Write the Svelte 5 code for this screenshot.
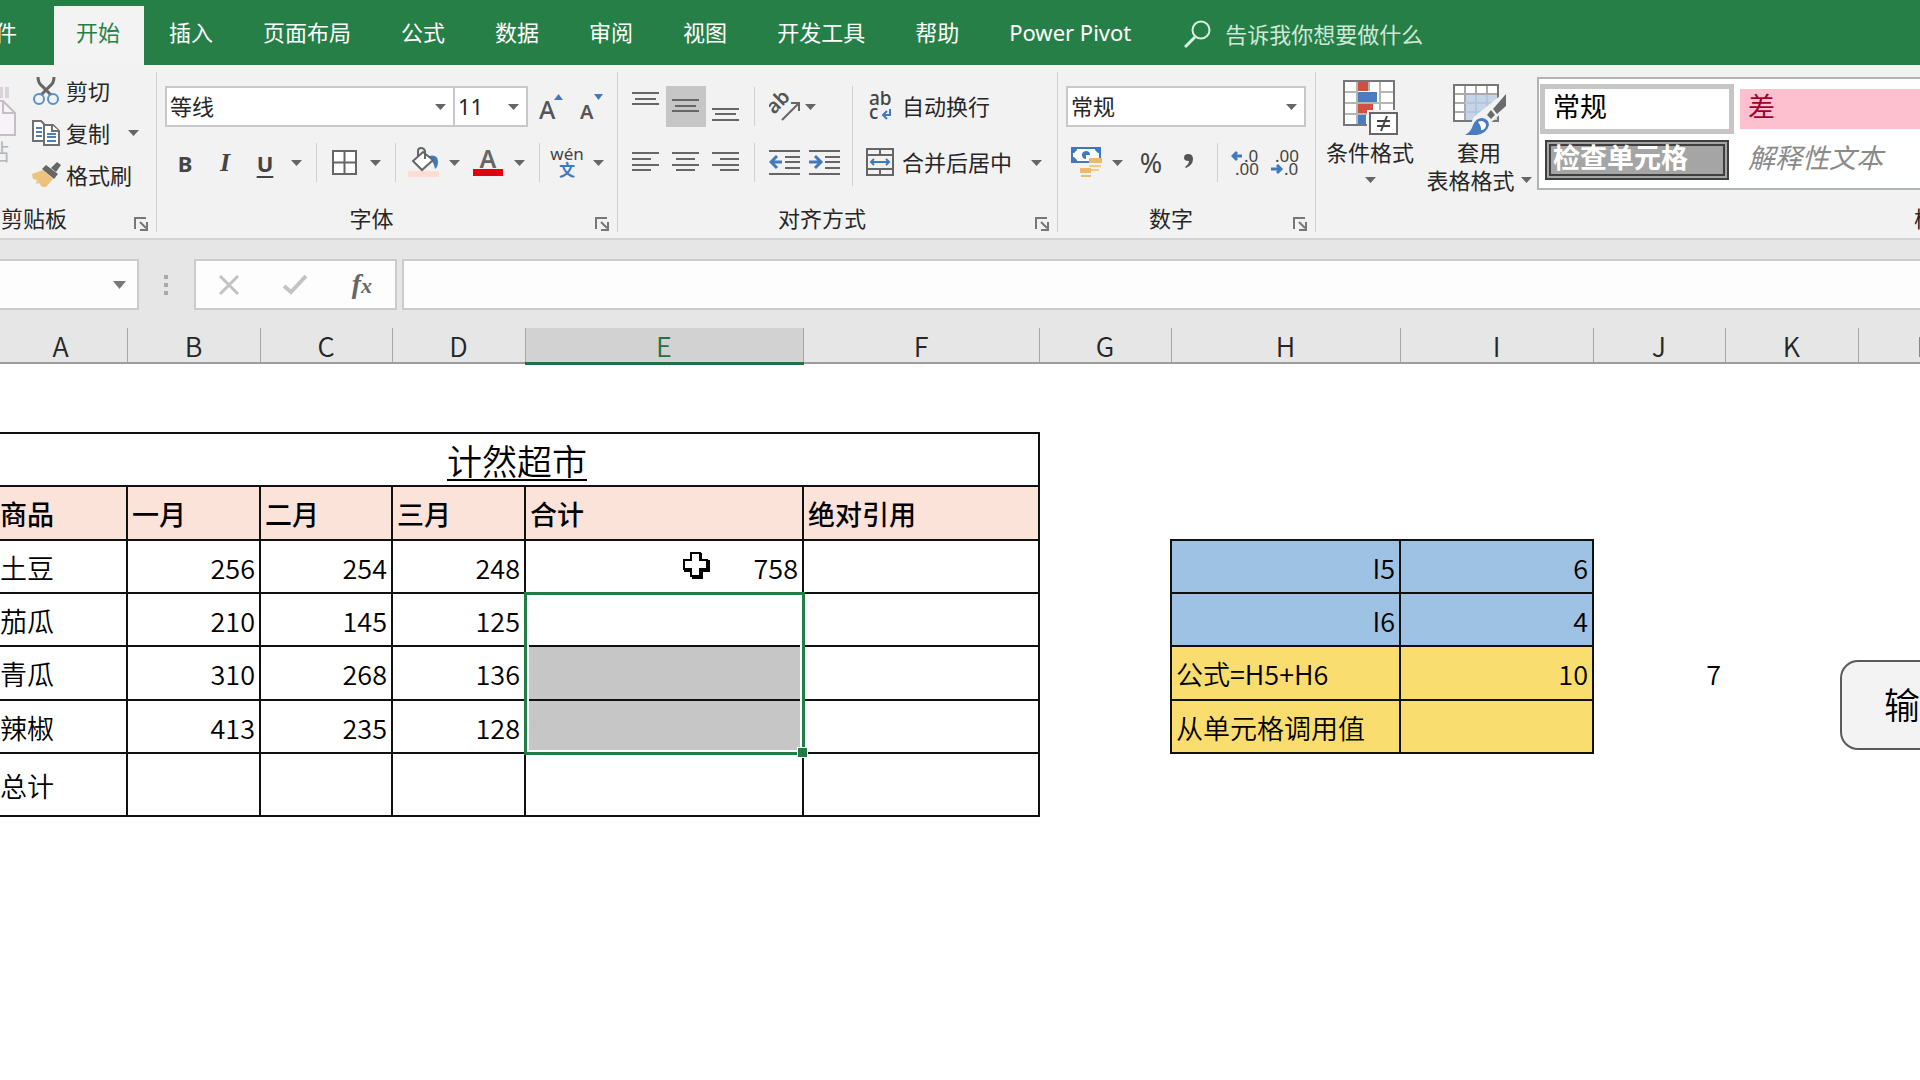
<script>
    let fontName = '等线';
    let fontSize = '11';
    let numberFormat = '常规';
    let formula = '';
    let cellName = '';

    const tabs = ['插入', '页面布局', '公式', '数据', '审阅', '视图', '开发工具', '帮助', 'Power Pivot'];

    const columns = [
        { name: 'A', width: 132 },
        { name: 'B', width: 133 },
        { name: 'C', width: 132 },
        { name: 'D', width: 133 },
        { name: 'E', width: 278 },
        { name: 'F', width: 236 },
        { name: 'G', width: 132 },
        { name: 'H', width: 229 },
        { name: 'I', width: 193 },
        { name: 'J', width: 132 },
        { name: 'K', width: 133 },
        { name: 'L', width: 132 }
    ];
    const tableWidth = columns.reduce((sum, c) => sum + c.width, 0);

    // every row lists its cells from column A on, '' is an empty cell
    const rows = [
        { height: 70, cells: [] },
        { height: 53, title: '计然超市', cells: [] },
        { height: 54, head: true, cells: ['商品', '一月', '二月', '三月', '合计', '绝对引用'] },
        { height: 53, cells: ['土豆', 256, 254, 248, 758, '', '', 'I5', 6], fill: 'blue' },
        { height: 53, cells: ['茄瓜', 210, 145, 125, '', '', '', 'I6', 4], fill: 'blue', active: true },
        { height: 54, cells: ['青瓜', 310, 268, 136, '', '', '', '公式=H5+H6', 10, 7], fill: 'yellow', picked: true },
        { height: 53, cells: ['辣椒', 413, 235, 128, '', '', '', '从单元格调用值', ''], fill: 'yellow', picked: true },
        { height: 63, cells: ['总计', '', '', '', '', ''] }
    ];

    function cellClass(row, r, i) {
        let value = row.cells[i];
        let list = [];
        if (r > 1 && i < 6) list.push('boxed');
        if (row.head && i < 6) list.push('head');
        if (row.fill && (i == 7 || i == 8)) list.push('boxed', row.fill);
        if (row.picked && i == 4) list.push('picked');
        if (typeof value == 'number' || /^I\d$/.test(value)) list.push('right');
        return list.join(' ');
    }
</script>

<style>
    :global(body) {
        background: #fff;
        overflow-x: hidden;
    }

    .app {
        font-family: "Noto Sans", "Noto Sans CJK SC", sans-serif;
        font-size: 22px;
        line-height: 28px;
        color: #262626;
        overflow: hidden;
    }

    button, input, select {
        font: inherit;
        color: inherit;
        background: none;
        border: none;
        border-radius: 0;
        margin: 0;
        padding: 0;
    }

    svg {
        display: block;
        flex: none;
    }

    /* tabs */

    .tabs {
        display: flex;
        align-items: flex-end;
        height: 65px;
        margin-left: -52px;
        background: #277f48;
        white-space: nowrap;
    }

    .tab {
        flex: none;
        height: 59px;
        padding: 0 25px 8px;
        color: #fff;
    }

    .tab.open {
        margin-left: 12px;
        padding: 0 24px 8px 22px;
        background: #f3f3f3;
        color: #277f48;
    }

    .tell {
        display: flex;
        align-items: center;
        gap: 14px;
        height: 59px;
        margin-left: 28px;
        padding-bottom: 4px;
        box-sizing: border-box;
        color: #cfe8d6;
    }

    /* ribbon */

    .ribbon {
        display: flex;
        height: 173px;
        background: #f2f2f2;
        border-bottom: 2px solid #d4d4d4;
    }

    .group {
        position: relative;
        flex: none;
        display: flex;
        flex-direction: column;
        box-sizing: border-box;
    }

    .group::after {
        content: "";
        position: absolute;
        right: 0;
        top: 7px;
        bottom: 6px;
        width: 1px;
        background: #d0d0d0;
    }

    .clipboard { width: 157px; }
    .font { width: 461px; }
    .align { width: 440px; }
    .number { width: 258px; }
    .styles { width: 1240px; }

    .body {
        height: 134px;
        display: flex;
        box-sizing: border-box;
    }

    .font .body, .number .body {
        flex-direction: column;
        gap: 15px;
        padding: 21px 8px 0;
    }

    .align .body {
        padding: 21px 0 0 8px;
    }

    .caption {
        display: flex;
        align-items: center;
        justify-content: center;
        height: 40px;
        padding-right: 32px;
    }

    .styles .caption {
        padding-right: 0;
    }

    .clipboard .caption {
        justify-content: flex-start;
        padding-left: 1px;
    }

    .launch {
        position: absolute;
        right: 8px;
        bottom: 7px;
    }

    .row {
        display: flex;
        align-items: center;
        height: 41px;
    }

    .tool {
        flex: none;
        display: flex;
        align-items: center;
        justify-content: center;
        width: 40px;
        height: 41px;
        color: #444;
    }

    .tool.on {
        background: #c6c6c6;
    }

    .drop {
        flex: none;
        display: flex;
        align-items: center;
        justify-content: center;
        width: 25px;
        height: 41px;
        padding-right: 2px;
        box-sizing: border-box;
    }

    .drop.tight {
        width: 14px;
    }

    .sep {
        flex: none;
        width: 1px;
        height: 39px;
        margin: 0 7px 0 6px;
        background: #d0d0d0;
    }

    .align .sep {
        margin: 0 9px 0 8px;
    }

    .sep.long {
        height: 100px;
    }

    .stack {
        display: flex;
        flex-direction: column;
        gap: 15px;
    }

    .wide {
        display: flex;
        align-items: center;
        gap: 8px;
        height: 41px;
        padding: 0 0 2px 4px;
        white-space: nowrap;
    }

    .merge {
        margin-right: 13px;
    }

    .bold { font-weight: bold; }
    .italic { font-family: "Liberation Serif", serif; font-style: italic; font-weight: bold; font-size: 26px; }
    .under { font-weight: bold; text-decoration: underline; text-underline-offset: 4px; text-decoration-thickness: 2px; }
    .percent { font-size: 27px; }

    .paste {
        flex: none;
        width: 70px;
        margin-left: -48px;
        padding: 16px 0 0;
        display: flex;
        flex-direction: column;
        align-items: center;
        color: #b5b5b5;
    }

    .clips {
        padding-top: 5px;
    }

    .clips .row {
        height: 42px;
    }

    .clip {
        display: flex;
        align-items: center;
        gap: 5px;
        padding-left: 10px;
        white-space: nowrap;
    }

    .clip + .drop {
        margin-left: 12px;
    }

    .pick {
        position: relative;
        flex: none;
    }

    .pick select {
        appearance: none;
        width: 100%;
        height: 41px;
        padding: 0 3px 2px;
        border: 2px solid #c8c8c8;
        background: #fff;
    }

    .pick + .pick select {
        border-left: none;
    }

    .pick svg {
        position: absolute;
        right: 9px;
        top: 18px;
        pointer-events: none;
    }

    .family { width: 290px; }
    .size { width: 73px; margin-right: 4px; }
    .format { width: 240px; }

    .big {
        flex: none;
        display: flex;
        flex-direction: column;
        align-items: center;
        justify-content: flex-start;
        width: 108px;
        padding: 14px 0 0;
        white-space: nowrap;
    }

    .big.table {
        width: 110px;
    }

    .big svg + span {
        margin-top: 3px;
    }

    .big .with-arrow {
        display: flex;
        align-items: center;
        gap: 6px;
    }

    .big .arrow-line {
        display: flex;
        align-items: center;
        height: 28px;
    }

    .gallery {
        flex: 1;
        display: grid;
        grid-template-columns: repeat(5, 184px);
        grid-auto-rows: 40px;
        gap: 11px;
        height: 113px;
        margin: 12px 0 0 3px;
        padding: 10px 6px;
        box-sizing: border-box;
        border: 2px solid #b0b4b4;
        background: #fff;
        font-size: 27px;
        overflow: hidden;
    }

    .swatch {
        text-align: left;
        padding: 0 8px 4px;
        background: #fff;
        white-space: nowrap;
    }

    .swatch.normal { box-shadow: 0 0 0 5px #c6c6c6; color: #000; }
    .swatch.bad { background: #fcc0cf; color: #9c0030; }
    .swatch.check { background: #a5a5a5; color: #fff; font-weight: bold; border: 6px double #3f3f3f; padding: 0 2px 4px; line-height: 24px; }
    .swatch.note { color: #8a8a8a; font-style: italic; }

    /* formula bar */

    .formula {
        display: flex;
        align-items: center;
        padding: 19px 0 18px;
        background: #e6e6e6;
    }

    .box {
        display: flex;
        align-items: center;
        height: 51px;
        box-sizing: border-box;
        border: 2px solid #cbcbcb;
        background: #fdfdfd;
    }

    .name {
        flex: none;
        width: 141px;
        margin-left: -2px;
        padding-right: 4px;
    }

    .name input {
        flex: 1;
        min-width: 0;
        height: 40px;
    }

    .dots {
        margin: 0 26px 0 25px;
    }

    .entry {
        flex: none;
        width: 203px;
    }

    .entry button {
        flex: 1;
        display: flex;
        justify-content: center;
    }

    .fx {
        font-family: "Liberation Serif", serif;
        font-style: italic;
        font-weight: bold;
        font-size: 28px;
        color: #666;
    }

    .fx small {
        font-size: 22px;
    }

    .text {
        flex: 1;
        min-width: 0;
        margin: 0 -2px 0 5px;
        padding: 0 8px;
    }

    /* sheet */

    .sheet {
        margin-left: -6px;
        font-family: "Noto Sans CJK SC", sans-serif;
        font-size: 27px;
        font-weight: 350;
        line-height: 36px;
        color: #000;
    }

    table {
        table-layout: fixed;
        border-collapse: collapse;
    }

    th, td {
        padding: 2px 4px 0;
        text-align: left;
        font-weight: 350;
        white-space: nowrap;
        overflow: visible;
    }

    thead th {
        height: 35px;
        padding: 2px 0 0;
        box-sizing: border-box;
        line-height: 30px;
        text-align: center;
        background: #e6e6e6;
        border-right: 1px solid #a6a6a6;
        border-bottom: 2px solid #9c9c9c;
        color: #262626;
    }

    thead th.current {
        background: #d2d2d2;
        border-bottom: 3px solid #217346;
        color: #217346;
    }

    td.boxed {
        border: 2px solid #111;
    }

    td.title {
        border: 2px solid #111;
        padding: 0;
        text-align: center;
        font-size: 35px;
        text-decoration: underline;
        text-decoration-thickness: 2px;
        text-underline-offset: 4px;
    }

    td.head {
        background: #fce3da;
        font-weight: 500;
    }

    td.right { text-align: right; }
    td.blue { background: #9dc2e4; }
    td.yellow { background: #f9dd6f; }
    td.picked { background: #c6c6c6; }

    td.anchor {
        position: relative;
    }

    .selection {
        position: absolute;
        left: -2px;
        top: -2px;
        width: 281px;
        height: 163px;
        box-sizing: border-box;
        border: 3px solid #217c45;
        box-shadow: inset 0 0 0 2px #fff;
        z-index: 1;
    }

    .selection::after {
        content: "";
        position: absolute;
        right: -6px;
        bottom: -6px;
        width: 9px;
        height: 9px;
        border: 1px solid #fff;
        background: #217c45;
    }

    .pointer {
        position: absolute;
        left: 156px;
        top: 10px;
    }

    .shape {
        position: absolute;
        left: 115px;
        top: 14px;
        width: 200px;
        height: 90px;
        padding: 0 0 4px 42px;
        border: 2px solid #5a5a5a;
        border-radius: 18px;
        background: #f3f3f3;
        font-size: 36px;
        text-align: left;
    }
</style>

{#snippet arrow()}
    <svg width="11" height="6" viewBox="0 0 11 6"><path d="M0 0h11L5.5 6z" fill="#666" /></svg>
{/snippet}

{#snippet launcher(label)}
    <button class="launch" aria-label={label}>
        <svg width="15" height="14" viewBox="0 0 15 14" fill="none" stroke="#777" stroke-width="2">
            <path d="M1 12V1h11M6 5l6 6M13 5v8H6" />
        </svg>
    </button>
{/snippet}

{#snippet lines(ys, xs)}
    <svg width="28" height="30" viewBox="0 0 28 30" stroke="#666" stroke-width="2">
        {#each ys as y, i}
            <path d="M{xs[i][0]} {y}H{xs[i][1]}" />
        {/each}
    </svg>
{/snippet}

<div class="app">
    <nav class="tabs">
        <button class="tab">文件</button>
        <button class="tab open">开始</button>
        {#each tabs as tab}
            <button class="tab">{tab}</button>
        {/each}
        <button class="tell">
            <svg width="27" height="28" viewBox="0 0 27 28" fill="none" stroke="#d9f0df" stroke-width="2">
                <circle cx="17" cy="10" r="8.5" />
                <path d="M11 17L1 27" stroke-width="3" />
            </svg>
            告诉我你想要做什么
        </button>
    </nav>

    <div class="ribbon">
        <section class="group clipboard">
            <div class="body">
                <button class="paste">
                    <svg width="60" height="56" viewBox="0 0 60 56" fill="none" stroke="#c4bfc4" stroke-width="2">
                        <path d="M4 8h40M4 8v42h20" />
                        <path d="M16 6h20v8H16zM42 6h4v11h-4zM48 6h4v11h-4z" fill="#d8d4d8" stroke="none" />
                        <path d="M26 20h20l12 12v22H26z" fill="#f8f3f8" />
                        <path d="M46 20v12h12" />
                    </svg>
                    粘贴
                </button>
                <div class="clips">
                    <div class="row">
                        <button class="clip">
                            <svg width="29" height="28" viewBox="0 0 29 28" fill="none">
                                <path d="M6 0q0 6 4 9l9 9M22 0q0 6-4 9l-9 9" stroke="#666" stroke-width="3" />
                                <circle cx="7" cy="22" r="5" stroke="#5a8fc8" stroke-width="2" />
                                <circle cx="21" cy="22" r="5" stroke="#5a8fc8" stroke-width="2" />
                            </svg>
                            剪切
                        </button>
                    </div>
                    <div class="row">
                        <button class="clip">
                            <svg width="29" height="26" viewBox="0 0 29 26" fill="#fff" stroke="#707070" stroke-width="2">
                                <path d="M1 1h8l5 5v15H1z" />
                                <path d="M4 8h6M4 12h6M4 16h6" stroke="#4a7fc0" />
                                <path d="M12 5h9l6 6v14H12z" />
                                <path d="M20 5v6h7" />
                                <path d="M15 14h9M15 17h9M15 21h9" stroke="#4a7fc0" />
                            </svg>
                            复制
                        </button>
                        <button class="drop" aria-label="复制选项">{@render arrow()}</button>
                    </div>
                    <div class="row">
                        <button class="clip">
                            <svg width="29" height="26" viewBox="0 0 29 26">
                                <path d="M0 12l11-4 10 9-7 8-4 0-3-4-3 1 1-4-4-1z" fill="#ecc27c" />
                                <path d="M10 7l4-4 12 9-4 5z" fill="#666" />
                                <path d="M19 6l6-6 4 3-5 7z" fill="#666" />
                            </svg>
                            格式刷
                        </button>
                    </div>
                </div>
            </div>
            <div class="caption">剪贴板</div>
            {@render launcher('剪贴板设置')}
        </section>

        <section class="group font">
            <div class="body">
                <div class="row">
                    <div class="pick family">
                        <select aria-label="字体" bind:value={fontName}><option>等线</option></select>
                        {@render arrow()}
                    </div>
                    <div class="pick size">
                        <select aria-label="字号" bind:value={fontSize}><option>11</option></select>
                        {@render arrow()}
                    </div>
                    <button class="tool" aria-label="增大字号">
                        <svg width="26" height="28" viewBox="0 0 26 28">
                            <text x="0" y="26" font-size="25" font-weight="500" fill="#555">A</text>
                            <path d="M15 7h9L19.5 1z" fill="#4079bd" />
                        </svg>
                    </button>
                    <button class="tool" aria-label="减小字号">
                        <svg width="26" height="28" viewBox="0 0 26 28">
                            <text x="1" y="26" font-size="20" font-weight="600" fill="#555">A</text>
                            <path d="M15 1h9L19.5 7z" fill="#4079bd" />
                        </svg>
                    </button>
                </div>
                <div class="row">
                    <button class="tool bold">B</button>
                    <button class="tool italic">I</button>
                    <button class="tool under">U</button>
                    <button class="drop" aria-label="下划线选项">{@render arrow()}</button>
                    <span class="sep"></span>
                    <button class="tool" aria-label="边框">
                        <svg width="25" height="25" viewBox="0 0 25 25" fill="#fff" stroke="#666" stroke-width="2">
                            <path d="M1 1h23v23H1zM12.5 1v23M1 12.5h23" />
                        </svg>
                    </button>
                    <button class="drop" aria-label="边框选项">{@render arrow()}</button>
                    <span class="sep"></span>
                    <button class="tool" aria-label="填充颜色">
                        <svg width="31" height="31" viewBox="0 0 31 31">
                            <path d="M0 24h31v6H0z" fill="#fcdcd5" />
                            <path d="M21 9q9-2 9 6 0 5-3 7-1-6-4-9z" fill="#4079bd" />
                            <path d="M15 5L5 14l9 9 11-10z" fill="#fff" stroke="#666" stroke-width="2" />
                            <path d="M10 9V4q0-3 3-3t4 3v8" fill="none" stroke="#666" stroke-width="2" />
                        </svg>
                    </button>
                    <button class="drop" aria-label="填充颜色选项">{@render arrow()}</button>
                    <button class="tool" aria-label="字体颜色">
                        <svg width="30" height="28" viewBox="0 0 30 28">
                            <text x="15" y="19" font-size="25" font-weight="600" fill="#666" text-anchor="middle">A</text>
                            <path d="M0 20h30v7H0z" fill="#e3000f" />
                        </svg>
                    </button>
                    <button class="drop" aria-label="字体颜色选项">{@render arrow()}</button>
                    <span class="sep"></span>
                    <button class="tool" aria-label="拼音指南">
                        <svg width="34" height="32" viewBox="0 0 34 32" text-anchor="middle">
                            <text x="17" y="13" font-size="17" fill="#444">wén</text>
                            <text x="17" y="29" font-size="16" font-weight="bold" fill="#4079bd">文</text>
                        </svg>
                    </button>
                    <button class="drop" aria-label="拼音选项">{@render arrow()}</button>
                </div>
            </div>
            <div class="caption">字体</div>
            {@render launcher('字体设置')}
        </section>

        <section class="group align">
            <div class="body">
                <div class="stack">
                    <div class="row">
                        <button class="tool" aria-label="顶端对齐">{@render lines([1, 7, 12], [[0, 27], [3, 24], [0, 27]])}</button>
                        <button class="tool on" aria-label="垂直居中">{@render lines([8, 14, 19], [[0, 27], [3, 24], [0, 27]])}</button>
                        <button class="tool" aria-label="底端对齐">{@render lines([17, 22, 28], [[0, 27], [3, 24], [0, 27]])}</button>
                        <span class="sep"></span>
                        <button class="tool" aria-label="方向">
                            <svg width="31" height="28" viewBox="0 0 31 28">
                                <text x="5" y="22" transform="rotate(-45 5 22)" font-size="20" font-weight="600" fill="#555">ab</text>
                                <path d="M13 27L29 11M22 10h8v8" fill="none" stroke="#666" stroke-width="2" />
                            </svg>
                        </button>
                        <button class="drop tight" aria-label="方向选项">{@render arrow()}</button>
                    </div>
                    <div class="row">
                        <button class="tool" aria-label="左对齐">{@render lines([5, 11, 17, 22], [[0, 27], [0, 19], [0, 27], [0, 19]])}</button>
                        <button class="tool" aria-label="居中">{@render lines([5, 11, 17, 22], [[0, 27], [4, 23], [0, 27], [4, 23]])}</button>
                        <button class="tool" aria-label="右对齐">{@render lines([5, 11, 17, 22], [[0, 27], [8, 27], [0, 27], [8, 27]])}</button>
                        <span class="sep"></span>
                        <button class="tool" aria-label="减少缩进量">
                            <svg width="31" height="26" viewBox="0 0 31 26" fill="none" stroke="#666" stroke-width="2">
                                <path d="M0 1h31M16 7h15M16 12h15M16 18h15M0 24h31" />
                                <path d="M13 12H3M8 6l-6 6 6 6" stroke="#4079bd" stroke-width="3" />
                            </svg>
                        </button>
                        <button class="tool" aria-label="增加缩进量">
                            <svg width="31" height="26" viewBox="0 0 31 26" fill="none" stroke="#666" stroke-width="2">
                                <path d="M0 1h31M16 7h15M16 12h15M16 18h15M0 24h31" />
                                <path d="M0 12h11M6 6l6 6-6 6" stroke="#4079bd" stroke-width="3" />
                            </svg>
                        </button>
                    </div>
                </div>
                <span class="sep long"></span>
                <div class="stack">
                    <button class="wide">
                        <svg width="28" height="30" viewBox="0 0 28 30">
                            <text x="3" y="14" font-size="19" font-weight="500" fill="#444">ab</text>
                            <text x="3" y="28" font-size="19" font-weight="500" fill="#444">c</text>
                            <path d="M24 18v6h-6M21 20l-4 4 4 4" fill="none" stroke="#4079bd" stroke-width="2" />
                        </svg>
                        自动换行
                    </button>
                    <div class="row">
                        <button class="wide merge">
                            <svg width="28" height="28" viewBox="0 0 28 28" fill="none" stroke="#666" stroke-width="2">
                                <path d="M1 1h26v26H1zM1 7h26M1 21h26M14 1v6M14 21v6" />
                                <path d="M5 14h18M8 11l-3 3 3 3M20 11l3 3-3 3" stroke="#4079bd" />
                            </svg>
                            合并后居中
                        </button>
                        <button class="drop" aria-label="合并选项">{@render arrow()}</button>
                    </div>
                </div>
            </div>
            <div class="caption">对齐方式</div>
            {@render launcher('对齐设置')}
        </section>

        <section class="group number">
            <div class="body">
                <div class="pick format">
                    <select aria-label="数字格式" bind:value={numberFormat}><option>常规</option></select>
                    {@render arrow()}
                </div>
                <div class="row">
                    <button class="tool" aria-label="会计数字格式">
                        <svg width="31" height="31" viewBox="0 0 31 31">
                            <path d="M1 1h28v14H1z" fill="#fff" stroke="#4079bd" stroke-width="2" />
                            <path d="M1 1h5v2L3 6H1zM24 1h5v5h-2l-3-3zM1 10h2l3 3v2H1z" fill="#4079bd" />
                            <path d="M15 4a4 4 0 0 0-4 5q1 3 4 3v-4h4q0-4-4-4z" fill="#4079bd" />
                            <path d="M18 11h13v5H18z" fill="#eabb6d" />
                            <path d="M18 18h12v2H18zM19 22h9v2h-9z" fill="#f0cb8c" />
                            <path d="M9 21h11v5H9zM10 28h10v2H10z" fill="#eabb6d" />
                        </svg>
                    </button>
                    <button class="drop" aria-label="会计格式选项">{@render arrow()}</button>
                    <button class="tool percent">%</button>
                    <button class="tool" aria-label="千位分隔样式">
                        <svg width="14" height="18" viewBox="0 0 14 18"><path d="M4 0q5 0 5 5 0 6-7 9l-1-1q4-3 4-6-5 0-5-3 0-4 4-4z" fill="#555" /></svg>
                    </button>
                    <span class="sep"></span>
                    <button class="tool" aria-label="增加小数位数">
                        <svg width="28" height="28" viewBox="0 0 28 28" font-size="17" fill="#444">
                            <text x="13" y="13">.0</text>
                            <text x="4" y="26">.00</text>
                            <path d="M11 7H2M6 3L2 7l4 4" fill="none" stroke="#4079bd" stroke-width="3" />
                        </svg>
                    </button>
                    <button class="tool" aria-label="减少小数位数">
                        <svg width="28" height="28" viewBox="0 0 28 28" font-size="17" fill="#444">
                            <text x="4" y="13">.00</text>
                            <text x="13" y="26">.0</text>
                            <path d="M0 20h9M6 16l4 4-4 4" fill="none" stroke="#4079bd" stroke-width="3" />
                        </svg>
                    </button>
                </div>
            </div>
            <div class="caption">数字</div>
            {@render launcher('数字设置')}
        </section>

        <section class="group styles">
            <div class="body">
                <button class="big">
                    <svg width="56" height="56" viewBox="0 0 56 56">
                        <path d="M2 2h50v44H2z" fill="#fff" />
                        <path d="M15 2h11v10H15zM15 25h16v10H15z" fill="#d2503f" />
                        <path d="M15 13h20v11H15zM15 36h9v10h-9z" fill="#4a7dc0" />
                        <path d="M2 13h13M2 24h50M2 35h50M38 13h14M15 2v44M38 2v44M27 2v10" fill="none" stroke="#b5b5b5" stroke-width="2" />
                        <path d="M2 2h50v44H2z" fill="none" stroke="#777" stroke-width="2" />
                        <path d="M25 31h31v25H25z" fill="#f2f2f2" />
                        <path d="M28 34h27v21H28z" fill="#fff" stroke="#666" stroke-width="2" />
                        <path d="M35 42h13M35 47h13M45 37l-6 15" stroke="#444" stroke-width="2" />
                    </svg>
                    <span>条件格式</span>
                    <span class="arrow-line">{@render arrow()}</span>
                </button>
                <button class="big table">
                    <svg width="56" height="56" viewBox="0 0 56 56">
                        <path d="M3 6h44v36H3z" fill="#fff" />
                        <path d="M14 16h33v26H14z" fill="#c6d4e8" />
                        <path d="M3 15h44M3 24h11M3 33h11M14 6v36M25 6v9M36 6v9" fill="none" stroke="#aaa" stroke-width="2" />
                        <path d="M14 24h33M14 33h33M25 16v26M36 16v26" fill="none" stroke="#b4c5df" stroke-width="2" />
                        <path d="M3 6h44v36H3z" fill="none" stroke="#777" stroke-width="2" />
                        <path d="M55 14v14L34 47q-4 9-22 9 9-8 12-17z" fill="#f2f2f2" stroke="#f2f2f2" stroke-width="3" />
                        <path d="M55 15v12l-9 8-4-5z" fill="#6b6b6b" />
                        <path d="M40 31l4 5-4 4-4-4z" fill="#6b6b6b" />
                        <path d="M14 56q6-3 8-10 3-7 9-7 7 1 7 7-2 8-12 10z" fill="#4a7dc0" />
                        <path d="M27 43q5-3 8 2 0 6-5 6 0-5-3-8z" fill="#fff" />
                    </svg>
                    <span>套用</span>
                    <span class="with-arrow">表格格式 {@render arrow()}</span>
                </button>
                <div class="gallery">
                    <button class="swatch normal">常规</button>
                    <button class="swatch bad">差</button>
                    <span></span>
                    <span></span>
                    <span></span>
                    <button class="swatch check">检查单元格</button>
                    <button class="swatch note">解释性文本</button>
                </div>
            </div>
            <div class="caption">样式</div>
        </section>
    </div>

    <div class="formula">
        <div class="box name">
            <input aria-label="名称框" bind:value={cellName}>
            <button class="drop" aria-label="名称列表">
                <svg width="13" height="8" viewBox="0 0 13 8"><path d="M0 0h13L6.5 8z" fill="#777" /></svg>
            </button>
        </div>
        <svg class="dots" width="4" height="20" viewBox="0 0 4 20" fill="#aaa">
            <path d="M0 0h4v4H0zM0 8h4v4H0zM0 16h4v4H0z" />
        </svg>
        <div class="box entry">
            <button aria-label="取消">
                <svg width="22" height="20" viewBox="0 0 22 20"><path d="M2 1l18 18M20 1L2 19" stroke="#c3c3c3" stroke-width="3" /></svg>
            </button>
            <button aria-label="输入">
                <svg width="26" height="20" viewBox="0 0 26 20"><path d="M2 11l7 6L24 1" fill="none" stroke="#c3c3c3" stroke-width="4" /></svg>
            </button>
            <button class="fx"><span>f<small>x</small></span></button>
        </div>
        <input class="box text" aria-label="编辑栏" bind:value={formula}>
    </div>

    <div class="sheet">
        <table style="width: {tableWidth}px">
            <colgroup>
                {#each columns as column}
                    <col style="width: {column.width}px">
                {/each}
            </colgroup>
            <thead>
                <tr>
                    {#each columns as column}
                        <th class:current={column.name == 'E'}>{column.name}</th>
                    {/each}
                </tr>
            </thead>
            <tbody>
                {#each rows as row, r}
                    <tr style="height: {row.height}px">
                        {#if row.title}
                            <td class="title" colspan="6">{row.title}</td>
                        {/if}
                        {#each columns as column, i}
                            {#if row.title && i < 6}
                                <!-- covered by the merged title -->
                            {:else if r == 3 && i == 4}
                                <td class="anchor {cellClass(row, r, i)}">
                                    {row.cells[i]}
                                    <svg class="pointer" width="28" height="28" viewBox="0 0 28 28">
                                        <path d="M10 3h9v7h8v10h-7v7H11v-7H3v-9h7z" fill="#000" stroke="#000" stroke-width="2" />
                                        <path d="M9 2h9v7h7v9h-7v7H9v-7H2V9h7z" fill="#fff" stroke="#000" stroke-width="2" />
                                    </svg>
                                </td>
                            {:else if row.active && i == 4}
                                <td class="anchor boxed"><div class="selection"></div></td>
                            {:else if r == 5 && i == 10}
                                <td class="anchor"><button class="shape">输</button></td>
                            {:else}
                                <td class={cellClass(row, r, i)}>{row.cells[i] ?? ''}</td>
                            {/if}
                        {/each}
                    </tr>
                {/each}
            </tbody>
        </table>
    </div>
</div>
